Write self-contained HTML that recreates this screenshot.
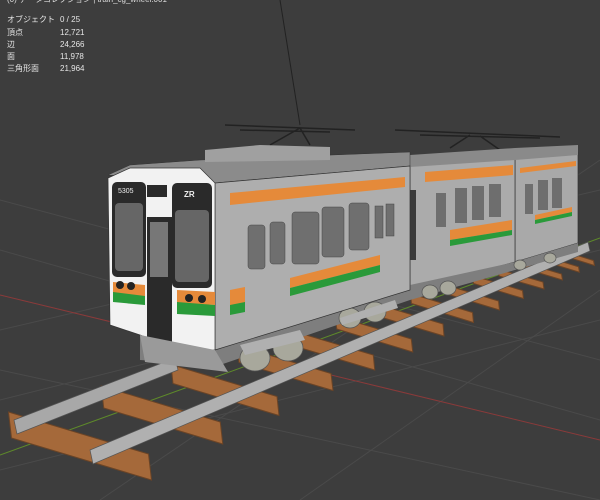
<!DOCTYPE html><html><head><meta charset="utf-8"><style>
body{margin:0;width:600px;height:500px;background:#3d3d3d;overflow:hidden;font-family:"Liberation Sans","Noto Sans CJK JP",sans-serif}
.t{position:absolute;left:7px;color:#e6e6e6;font-size:8px;line-height:13px}
</style></head><body>
<svg width="600" height="500" style="position:absolute;left:0;top:0">
<g stroke="#4a4a4a" stroke-width="1">
<line x1="0" y1="330" x2="600" y2="190"/><line x1="0" y1="400" x2="600" y2="250"/><line x1="0" y1="470" x2="600" y2="320"/>
<line x1="0" y1="250" x2="600" y2="420"/><line x1="0" y1="200" x2="600" y2="360"/><line x1="100" y1="500" x2="600" y2="160"/>
<line x1="0" y1="370" x2="600" y2="500"/><line x1="300" y1="500" x2="600" y2="290"/>
</g>
<line x1="0" y1="295" x2="600" y2="440" stroke="#8a3a3a" stroke-width="1"/>
<line x1="0" y1="455" x2="600" y2="238" stroke="#5e8a2a" stroke-width="1"/>
<!-- sleepers -->
<g fill="#a5693a" stroke="#6b4426">
<rect x="-0.5" y="-0.5" width="1" height="1" vector-effect="non-scaling-stroke" transform="matrix(140,42,3,26,80,446)"/>
<rect x="-0.5" y="-0.5" width="1" height="1" vector-effect="non-scaling-stroke" transform="matrix(119,36,2.5,22,162,415)"/>
<rect x="-0.5" y="-0.5" width="1" height="1" vector-effect="non-scaling-stroke" transform="matrix(106,32,2,19,225,390)"/>
<rect x="-0.5" y="-0.5" width="1" height="1" vector-effect="non-scaling-stroke" transform="matrix(94,28,2,17,285,368)"/>
<rect x="-0.5" y="-0.5" width="1" height="1" vector-effect="non-scaling-stroke" transform="matrix(84,25,1.5,15,332,350)"/>
<rect x="-0.5" y="-0.5" width="1" height="1" vector-effect="non-scaling-stroke" transform="matrix(76,23,1.5,13,374,334)"/>
<rect x="-0.5" y="-0.5" width="1" height="1" vector-effect="non-scaling-stroke" transform="matrix(67,20,1,12,410,320)"/>
<rect x="-0.5" y="-0.5" width="1" height="1" vector-effect="non-scaling-stroke" transform="matrix(62,19,1,10,442,308)"/>
<rect x="-0.5" y="-0.5" width="1" height="1" vector-effect="non-scaling-stroke" transform="matrix(56,17,1,9,471,297)"/>
<rect x="-0.5" y="-0.5" width="1" height="1" vector-effect="non-scaling-stroke" transform="matrix(50,15,1,8,498,287)"/>
<rect x="-0.5" y="-0.5" width="1" height="1" vector-effect="non-scaling-stroke" transform="matrix(45,13,1,7,521,279)"/>
<rect x="-0.5" y="-0.5" width="1" height="1" vector-effect="non-scaling-stroke" transform="matrix(40,12,1,6,542,271)"/>
<rect x="-0.5" y="-0.5" width="1" height="1" vector-effect="non-scaling-stroke" transform="matrix(36,11,1,5.5,561,264)"/>
<rect x="-0.5" y="-0.5" width="1" height="1" vector-effect="non-scaling-stroke" transform="matrix(32,10,1,5,578,258)"/>
</g>
<!-- rails -->
<polygon points="14,420 175,358 178,370 17,434" fill="#a8a8a8" stroke="#555" stroke-width="0.7"/>
<polygon points="90,450 588,242 590,251 93,464" fill="#b0b0b0" stroke="#555" stroke-width="0.7"/>
<!-- wires -->
<line x1="280" y1="0" x2="300" y2="125" stroke="#222" stroke-width="1"/>
<!-- pantographs -->
<g stroke="#222" stroke-width="1.5" fill="none">
<path d="M225,125 L355,130 M240,130 L330,132 M270,145 L300,128 M310,145 L300,128"/>
<path d="M395,130 L560,137 M420,135 L540,138 M450,148 L470,135 M500,150 L480,136"/>
</g>
<!-- car 3 -->
<polygon points="515,158 578,152 578,243 515,262" fill="#a9a9a9" stroke="#333" stroke-width="0.7"/>
<polygon points="520,168 576,161 576,166 520,173" fill="#e58a3a"/>
<polygon points="535,215 572,207 572,212 535,220" fill="#e58a3a"/>
<polygon points="535,220 572,212 572,216 535,224" fill="#2a9a3a"/>
<g fill="#6e6e6e"><rect x="525" y="184" width="8" height="30"/><rect x="538" y="180" width="10" height="30"/><rect x="552" y="178" width="10" height="30"/></g>
<!-- car 2 -->
<polygon points="410,165 515,158 515,262 410,290" fill="#ababab" stroke="#333" stroke-width="0.7"/>
<polygon points="410,155 515,148 578,145 578,155 515,160 410,167" fill="#8a8a8a"/>
<polygon points="425,172 513,165 513,175 425,182" fill="#e58a3a"/>
<polygon points="450,230 512,220 512,230 450,240" fill="#e58a3a"/>
<polygon points="450,240 512,230 512,235 450,246" fill="#2a9a3a"/>
<g fill="#6e6e6e"><rect x="436" y="193" width="10" height="34"/><rect x="455" y="188" width="12" height="35"/><rect x="472" y="186" width="12" height="34"/><rect x="489" y="184" width="12" height="33"/></g>
<rect x="409" y="190" width="7" height="70" fill="#3a3a3a"/>
<!-- underframe -->
<polygon points="140,335 410,285 515,262 578,243 578,252 410,300 220,365 140,360" fill="#7e7e7e"/>
<g fill="#a8a89c" stroke="#555" stroke-width="0.7">
<ellipse cx="255" cy="358" rx="15" ry="13"/><ellipse cx="288" cy="348" rx="15" ry="13"/>
<ellipse cx="350" cy="318" rx="11" ry="10"/><ellipse cx="375" cy="312" rx="11" ry="10"/>
<ellipse cx="430" cy="292" rx="8" ry="7"/><ellipse cx="448" cy="288" rx="8" ry="7"/>
<ellipse cx="520" cy="265" rx="6" ry="5"/><ellipse cx="550" cy="258" rx="6" ry="5"/>
</g>
<polygon points="240,345 300,330 305,340 245,355" fill="#b0b0b0"/>
<polygon points="340,318 395,300 398,308 342,325" fill="#b0b0b0"/>
<!-- car 1 roof -->
<polygon points="108,175 130,165 200,160 410,152 410,166 215,183" fill="#8b8b8b" stroke="#333" stroke-width="0.5"/>
<polygon points="205,150 260,145 330,147 330,160 205,162" fill="#a0a0a0"/>
<!-- car 1 side -->
<polygon points="215,183 410,166 410,290 215,350" fill="#aeaeae" stroke="#333" stroke-width="0.7"/>
<polygon points="230,193 405,177 405,187 230,205" fill="#e58a3a"/>
<polygon points="290,278 380,255 380,265 290,288" fill="#e58a3a"/>
<polygon points="290,288 380,265 380,272 290,296" fill="#2a9a3a"/>
<polygon points="230,290 245,287 245,305 230,308" fill="#e58a3a"/>
<polygon points="230,305 245,302 245,312 230,315" fill="#2a9a3a"/>
<g fill="#6f6f6f" stroke="#444" stroke-width="0.5">
<rect x="248" y="225" width="17" height="44" rx="3"/><rect x="270" y="222" width="15" height="42" rx="3"/>
<rect x="292" y="212" width="27" height="52" rx="3"/><rect x="322" y="207" width="22" height="50" rx="3"/><rect x="349" y="203" width="20" height="47" rx="3"/>
<rect x="375" y="206" width="8" height="32"/><rect x="386" y="204" width="8" height="32"/>
</g>
<!-- front -->
<polygon points="108,178 130,168 200,168 215,183 215,350 180,350 140,335 110,325" fill="#f2f2f2" stroke="#333" stroke-width="0.7"/>
<rect x="112" y="182" width="34" height="95" rx="5" fill="#2a2a2a"/>
<rect x="115" y="203" width="28" height="68" rx="4" fill="#666"/>
<rect x="172" y="183" width="40" height="105" rx="5" fill="#2a2a2a"/>
<rect x="175" y="210" width="34" height="72" rx="4" fill="#666"/>
<rect x="147" y="217" width="25" height="125" fill="#2a2a2a"/>
<rect x="150" y="222" width="18" height="55" fill="#777"/>
<rect x="147" y="185" width="20" height="12" fill="#2a2a2a"/>
<polygon points="113,282 145,285 145,300 113,297" fill="#e58a3a"/>
<polygon points="113,292 145,296 145,305 113,302" fill="#2a9a3a"/>
<polygon points="177,290 215,292 215,305 177,303" fill="#e58a3a"/>
<polygon points="177,302 215,305 215,316 177,314" fill="#2a9a3a"/>
<g fill="#222"><circle cx="120" cy="285" r="4"/><circle cx="131" cy="286" r="4"/><circle cx="189" cy="298" r="4"/><circle cx="202" cy="299" r="4"/></g>
<polygon points="140,335 215,350 228,372 145,362" fill="#9a9a9a"/>
<text x="118" y="193" fill="#eee" font-size="7" font-family="Liberation Sans">5305</text>
<text x="184" y="197" fill="#eee" font-size="8" font-weight="bold" font-family="Liberation Sans">ZR</text>
</svg>
<div class="t" style="top:-7px;color:#ddd">(0) データコレクション | train_cg_wheel.001</div>
<div class="t" style="top:13px">オブジェクト</div><div class="t" style="top:13px;left:60px">0 / 25</div>
<div class="t" style="top:26px">頂点</div><div class="t" style="top:26px;left:60px">12,721</div>
<div class="t" style="top:38px">辺</div><div class="t" style="top:38px;left:60px">24,266</div>
<div class="t" style="top:50px">面</div><div class="t" style="top:50px;left:60px">11,978</div>
<div class="t" style="top:62px">三角形面</div><div class="t" style="top:62px;left:60px">21,964</div>
</body></html>
